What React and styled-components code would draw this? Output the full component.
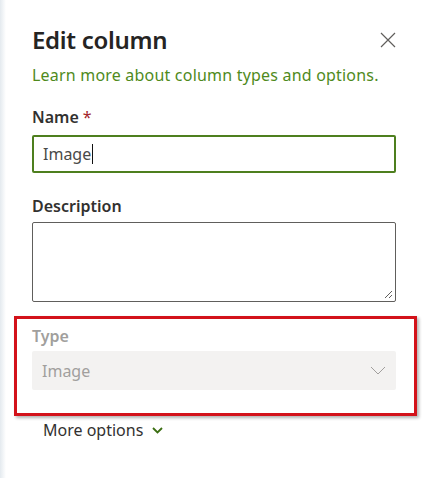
import React from "react";
import styled, { createGlobalStyle } from "styled-components";

const Global = createGlobalStyle`
  html, body {
    margin: 0;
    padding: 0;
    background: #fff linear-gradient(to right, #e4eaef, #ffffff 6px) no-repeat;
    font-family: "Noto Sans", "Open Sans", sans-serif;
    color: #323130;
  }
`;

const Panel = styled.div`
  width: 426px;
  height: 478px;
  box-sizing: border-box;
  padding: 0 30px 0 32px;
  overflow: hidden;
`;

const Header = styled.div`
  margin-top: 24px;
  height: 32px;
  display: flex;
  align-items: center;
  justify-content: space-between;
`;

const Title = styled.h1`
  margin: 0;
  font-size: 24px;
  font-weight: 600;
  line-height: 32px;
  color: #252423;
  letter-spacing: -0.3px;
`;

const Close = styled.button`
  border: none;
  background: none;
  padding: 0;
  width: 16px;
  height: 16px;
  display: flex;
  cursor: pointer;
`;

const LearnLink = styled.a`
  display: block;
  margin-top: 8px;
  font-size: 16px;
  line-height: 22px;
  color: #4f8a1c;
  text-decoration: none;
  letter-spacing: 0.2px;
`;

const Label = styled.div`
  margin-top: ${(p) => p.$top || 0}px;
  font-size: 16px;
  font-weight: 600;
  line-height: 22px;
  color: ${(p) => (p.$muted ? "#a19f9d" : "#323130")};
`;

const Required = styled.span`
  color: #a4262c;
  font-weight: 400;
  margin-left: 4px;
`;

const TextBox = styled.div`
  margin-top: 7px;
  height: 38px;
  box-sizing: border-box;
  border: 2px solid #4e7f1e;
  border-radius: 2px;
  display: flex;
  align-items: center;
  padding-left: 9px;
  font-size: 16px;
  color: #4a4a48;
`;

const Caret = styled.span`
  display: inline-block;
  width: 1px;
  height: 20px;
  background: #111;
  margin-left: 1px;
`;

const Area = styled.div`
  position: relative;
  margin-top: 5px;
  height: 80px;
  box-sizing: border-box;
  border: 1px solid #605e5c;
  border-radius: 2px;
`;

const Grip = styled.svg`
  position: absolute;
  right: 2px;
  bottom: 2px;
`;

const Highlight = styled.div`
  margin: 14px -21px 0 -18px;
  border: 3px solid #d3121a;
  box-shadow: 2px 2px 3px rgba(0, 0, 0, 0.3);
  padding: 6px 18px 23px 15px;
`;

const Select = styled.div`
  margin-top: 4px;
  height: 39px;
  background: #f3f2f1;
  border-radius: 2px;
  display: flex;
  align-items: center;
  justify-content: space-between;
  padding: 0 10px 0 10px;
  font-size: 16px;
  color: #a19f9d;
`;

const MoreOptions = styled.button`
  margin-top: 3px;
  border: none;
  background: none;
  padding: 0 0 0 11px;
  height: 22px;
  display: flex;
  align-items: center;
  gap: 9px;
  font-family: inherit;
  font-size: 16px;
  color: #323130;
  cursor: pointer;
`;

export default function App() {
  return (
    <>
      <Global />
      <Panel>
        <Header>
          <Title>Edit column</Title>
          <Close aria-label="Close">
            <svg width="16" height="16" viewBox="0 0 16 16">
              <path d="M1 1L15 15M15 1L1 15" stroke="#605e5c" strokeWidth="1.2" fill="none" />
            </svg>
          </Close>
        </Header>
        <LearnLink href="#">Learn more about column types and options.</LearnLink>

        <Label $top={20}>
          Name<Required>*</Required>
        </Label>
        <TextBox>
          Image<Caret />
        </TextBox>

        <Label $top={22}>Description</Label>
        <Area>
          <Grip width="10" height="10" viewBox="0 0 10 10">
            <path d="M9 2L2 9M9 6L6 9" stroke="#605e5c" strokeWidth="1" fill="none" />
          </Grip>
        </Area>

        <Highlight>
          <Label $muted>Type</Label>
          <Select>
            Image
            <svg width="16" height="9" viewBox="0 0 16 9">
              <path d="M1 1L8 8L15 1" stroke="#a19f9d" strokeWidth="1" fill="none" />
            </svg>
          </Select>
        </Highlight>

        <MoreOptions>
          More options
          <svg width="11" height="7" viewBox="0 0 11 7">
            <path d="M1 1L5.5 5.5L10 1" stroke="#3b6e12" strokeWidth="1.8" fill="none" />
          </svg>
        </MoreOptions>
      </Panel>
    </>
  );
}
